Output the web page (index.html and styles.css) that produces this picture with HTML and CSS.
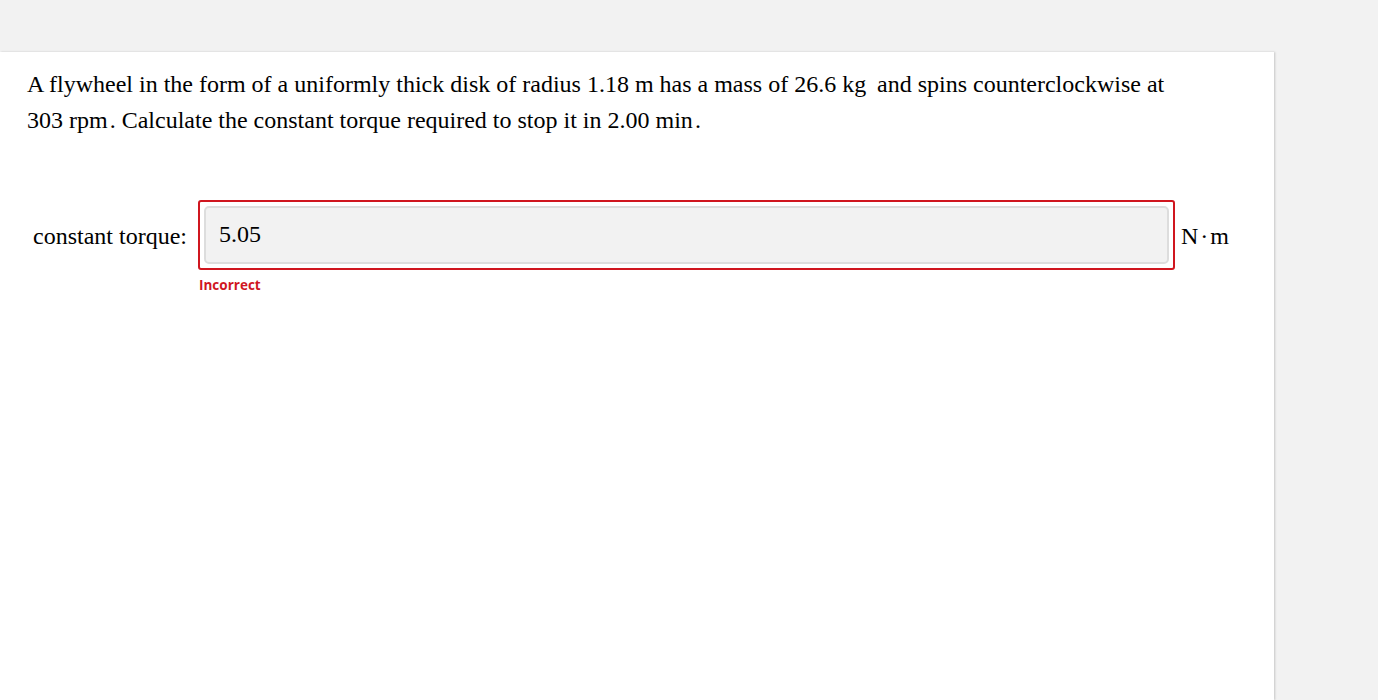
FILE: index.html
```html
<!DOCTYPE html>
<html>
<head>
<meta charset="utf-8">
<link rel="stylesheet" href="styles.css">
</head>
<body>
<div class="page">
  <div class="panel">
    <p class="question">A flywheel in the form of a uniformly thick disk of radius 1.18 m has a mass of 26.6 kg&thinsp; and spins counterclockwise at 303 rpm&#8202;. Calculate the constant torque required to stop it in 2.00 min&#8202;.</p>
    <div class="answer-row">
      <label class="label">constant torque:</label>
      <div class="field">
        <div class="box">
          <div class="input">5.05</div>
        </div>
        <div class="feedback">Incorrect</div>
      </div>
      <div class="unit">N&#8202;·&#8202;m</div>
    </div>
  </div>
</div>
</body>
</html>
```
FILE: styles.css
```css
html, body {
  margin: 0;
  padding: 0;
  background: #f2f2f2;
}
.page {
  padding-top: 52px;
  height: 648px;
}
.panel {
  width: 1274px;
  height: 648px;
  background: #fff;
  box-shadow: 1px 0 2px rgba(0,0,0,0.18);
  padding: 14px 0 0 27px;
  box-sizing: border-box;
  font-family: "Liberation Serif", "Times New Roman", serif;
  color: #000;
}
.question {
  margin: 0;
  font-size: 24px;
  line-height: 36px;
  width: 1150px;
}
.answer-row {
  display: flex;
  align-items: flex-start;
  margin-top: 62px;
}
.label {
  font-size: 24px;
  line-height: 72px;
  padding-left: 6px;
  width: 165px;
}
.field {
  display: flex;
  flex-direction: column;
}
.box {
  width: 977px;
  height: 70px;
  box-sizing: border-box;
  border: 2px solid #d0161f;
  border-radius: 3px;
  padding: 4px;
}
.input {
  height: 58px;
  box-sizing: border-box;
  background: #f2f2f2;
  border: 2px solid #dddddd;
  border-radius: 5px;
  font-size: 24px;
  line-height: 52px;
  padding-left: 13px;
}
.feedback {
  font-family: "Open Sans", "Noto Sans", sans-serif;
  font-weight: 700;
  font-size: 13.5px;
  color: #d0161f;
  margin-top: 6px;
  padding-left: 1px;
}
.unit {
  font-size: 24px;
  line-height: 72px;
  padding-left: 6px;
}
```
